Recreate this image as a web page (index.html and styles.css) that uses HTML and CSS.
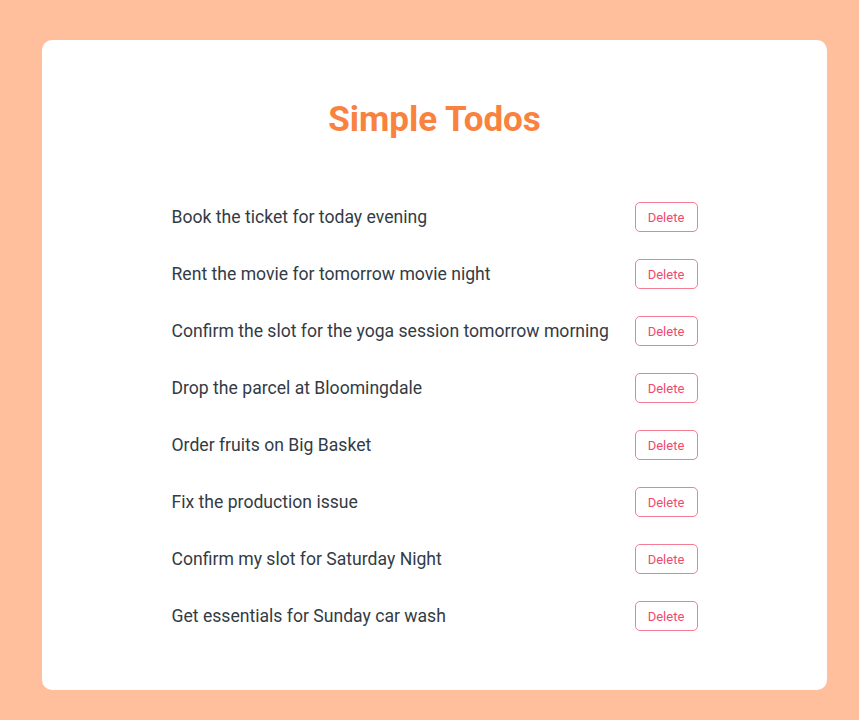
FILE: index.html
```html
<!DOCTYPE html>
<html lang="en">
<head>
<meta charset="utf-8">
<title>Simple Todos</title>
<link rel="stylesheet" href="styles.css">
</head>
<body>
<main class="card">
  <h1 class="title">Simple Todos</h1>
  <ul class="todo-list">
    <li class="todo-item"><p class="todo-text">Book the ticket for today evening</p><button class="delete-btn">Delete</button></li>
    <li class="todo-item"><p class="todo-text">Rent the movie for tomorrow movie night</p><button class="delete-btn">Delete</button></li>
    <li class="todo-item"><p class="todo-text">Confirm the slot for the yoga session tomorrow morning</p><button class="delete-btn">Delete</button></li>
    <li class="todo-item"><p class="todo-text">Drop the parcel at Bloomingdale</p><button class="delete-btn">Delete</button></li>
    <li class="todo-item"><p class="todo-text">Order fruits on Big Basket</p><button class="delete-btn">Delete</button></li>
    <li class="todo-item"><p class="todo-text">Fix the production issue</p><button class="delete-btn">Delete</button></li>
    <li class="todo-item"><p class="todo-text">Confirm my slot for Saturday Night</p><button class="delete-btn">Delete</button></li>
    <li class="todo-item"><p class="todo-text">Get essentials for Sunday car wash</p><button class="delete-btn">Delete</button></li>
  </ul>
</main>
</body>
</html>
```
FILE: styles.css
```css
html, body {
  margin: 0;
  padding: 0;
}
body {
  background: #ffbf9c;
  font-family: Roboto, "Liberation Sans", sans-serif;
  height: 720px;
  padding: 40px 32px 30px 42px;
  box-sizing: border-box;
}
.card {
  background: #ffffff;
  border-radius: 10px;
  height: 650px;
  box-sizing: border-box;
  padding-top: 54px;
  display: flex;
  flex-direction: column;
  align-items: center;
}
.title {
  margin: 0;
  font-size: 35px;
  font-weight: 700;
  line-height: 52px;
  color: #f9823e;
}
.todo-list {
  list-style: none;
  margin: 0;
  margin-top: 56px;
  padding: 0;
  width: 526px;
  display: flex;
  flex-direction: column;
  gap: 27px;
}
.todo-item {
  display: flex;
  align-items: center;
  justify-content: space-between;
  height: 30px;
}
.todo-text {
  margin: 0;
  font-size: 17.6px;
  color: #333b45;
}
.delete-btn {
  font-family: Roboto, "Liberation Sans", sans-serif;
  font-size: 13px;
  color: #ef4a6e;
  background: #ffffff;
  border: 1px solid #f47d96;
  border-radius: 5px;
  width: 63px;
  height: 30px;
  padding: 0;
}
```
